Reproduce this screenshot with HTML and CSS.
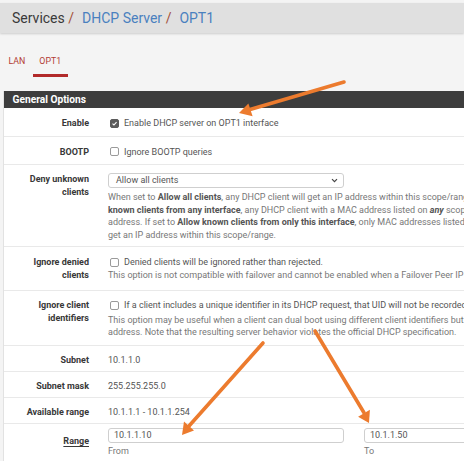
FILE: index.html
```html
<!DOCTYPE html>
<html lang="en">
<head>
<meta charset="utf-8">
<title>Services / DHCP Server / OPT1</title>
<link rel="stylesheet" href="styles.css">
</head>
<body>
<header class="crumbs">
  <span class="crumb-root">Services</span><span class="sep">/</span><a class="crumb-link">DHCP Server</a><span class="sep">/</span><a class="crumb-link">OPT1</a>
</header>

<nav class="tabs">
  <a class="tab">LAN</a>
  <a class="tab active">OPT1</a>
</nav>

<section class="panel">
  <h2 class="panel-title">General Options</h2>

  <div class="row r-chk">
    <div class="lbl">Enable</div>
    <div class="val">
      <label class="chk"><span class="box checked"><svg viewBox="0 0 10 10" width="9" height="9"><path d="M2.2 5.2 L4.2 7.2 L7.9 2.9" fill="none" stroke="#fff" stroke-width="1.6"/></svg></span>Enable DHCP server on OPT1 interface</label>
    </div>
  </div>

  <div class="row r-chk">
    <div class="lbl">BOOTP</div>
    <div class="val">
      <label class="chk"><span class="box"></span>Ignore BOOTP queries</label>
    </div>
  </div>

  <div class="row r-deny">
    <div class="lbl lbl-multi">Deny unknown<br>clients</div>
    <div class="val">
      <div class="select">Allow all clients<svg class="chev" viewBox="0 0 8 6" width="7" height="5"><path d="M1 1.3 L4 4.3 L7 1.3" fill="none" stroke="#444" stroke-width="1.4"/></svg></div>
      <div class="help">
        <div class="line">When set to <b>Allow all clients</b>, any DHCP client will get an IP address within this scope/range on this interface. If set to <b>Allow</b></div>
        <div class="line"><b>known clients from any interface</b>, any DHCP client with a MAC address listed on <b><i>any</i></b> scope(s)/interface(s) will get an IP</div>
        <div class="line">address. If set to <b>Allow known clients from only this interface</b>, only MAC addresses listed below (i.e. for this interface) will</div>
        <div class="line">get an IP address within this scope/range.</div>
      </div>
    </div>
  </div>

  <div class="row r-denied">
    <div class="lbl lbl-multi">Ignore denied<br>clients</div>
    <div class="val">
      <label class="chk"><span class="box"></span>Denied clients will be ignored rather than rejected.</label>
      <div class="help">
        <div class="line">This option is not compatible with failover and cannot be enabled when a Failover Peer IP address is configured.</div>
      </div>
    </div>
  </div>

  <div class="row r-uid">
    <div class="lbl lbl-multi">Ignore client<br>identifiers</div>
    <div class="val">
      <label class="chk"><span class="box"></span>If a client includes a unique identifier in its DHCP request, that UID will not be recorded<span class="mark"></span> in its lease.</label>
      <div class="help help-gap">
        <div class="line">This option may be useful when a client can dual boot using different client identifiers but the same hardware (MAC)</div>
        <div class="line">address. Note that the resulting server behavior violates the official DHCP specification.</div>
      </div>
    </div>
  </div>

  <div class="row r-static">
    <div class="lbl">Subnet</div>
    <div class="val">10.1.1.0</div>
  </div>

  <div class="row r-static">
    <div class="lbl">Subnet mask</div>
    <div class="val">255.255.255.0</div>
  </div>

  <div class="row r-static">
    <div class="lbl">Available range</div>
    <div class="val">10.1.1.1 - 10.1.1.254</div>
  </div>

  <div class="row r-range">
    <div class="lbl"><span class="abbr">Range</span></div>
    <div class="val range-cols">
      <div class="range-col">
        <div class="input">10.1.1.10</div>
        <div class="sub">From</div>
      </div>
      <div class="range-col">
        <div class="input">10.1.1.50</div>
        <div class="sub">To</div>
      </div>
    </div>
  </div>
</section>

<svg class="annot" viewBox="0 0 464 461" width="464" height="461">
  <g stroke="#ec7b2e" stroke-width="3.6" stroke-linecap="round" fill="none">
    <line x1="344" y1="82" x2="250" y2="109.6"/>
    <line x1="263" y1="343" x2="189" y2="426"/>
    <line x1="315" y1="331" x2="364" y2="412.7"/>
  </g>
  <g fill="#ec7b2e">
    <polygon points="239,113 252.6,116.2 248.4,103.4"/>
    <polygon points="182,435 194,430.5 184,421.5"/>
    <polygon points="369,423 369.9,409.8 358.1,416.8"/>
  </g>
</svg>
</body>
</html>
```

FILE: styles.css
```css
* { box-sizing: border-box; }

html, body { margin: 0; padding: 0; }

body {
  position: relative;
  width: 464px;
  height: 461px;
  overflow: hidden;
  background: #f4f4f4;
  font-family: Roboto, "Liberation Sans", sans-serif;
  color: #555;
}

/* breadcrumb header */
.crumbs {
  margin-top: 3px;
  height: 30px;
  background: #e0e0e0;
  box-shadow: 0 1px 2px rgba(0, 0, 0, 0.16);
  display: flex;
  align-items: center;
  padding-left: 12px;
  font-size: 14px;
  white-space: nowrap;
}
.crumb-root { color: #3a3a3a; }
.crumb-link { color: #4a80bf; }
.sep { color: #a4503a; margin: 0 8px 0 3.5px; }

/* tabs */
.tabs {
  display: flex;
  margin-top: 15px;
  padding-left: 2px;
}
.tab {
  padding: 7px 6.5px 6px;
  line-height: 13px;
  font-size: 8.8px;
  color: #b23b35;
  border-bottom: 3px solid transparent;
  margin-right: 1px;
}
.tab.active { border-bottom-color: #b22a2a; }

/* panel */
.panel {
  margin: 14px 0 0 3px;
  width: 720px;
  background: #fff;
  border-left: 1px solid #e2e2e2;
}
.panel-title {
  margin: 0;
  height: 17px;
  line-height: 17px;
  padding-left: 8.5px;
  background: #3d3d3d;
  color: #fff;
  font-size: 10.2px;
  font-weight: 700;
}

.row {
  display: grid;
  grid-template-columns: 95px 1fr;
  border-bottom: 1px solid #e9e9e9;
  font-size: 9px;
  line-height: 12.5px;
}
.lbl {
  text-align: right;
  padding-right: 10px;
  font-weight: 700;
  color: #383838;
  white-space: nowrap;
}
.val {
  padding-left: 9px;
  white-space: nowrap;
  color: #555;
}

.r-chk { padding: 9px 0 6px; }
.r-deny { padding: 8px 0 5px; }
.r-denied { padding: 9px 0 9px; }
.r-uid { padding: 8px 0 6px; }
.r-static { padding: 8.5px 0 4px; }
.r-range { padding: 4px 0 6px; }
.r-range .lbl { padding-top: 7.5px; }

/* checkbox */
.chk { display: flex; align-items: center; color: #555; }
.box {
  width: 9px;
  height: 9px;
  margin: 0 5px 0 2px;
  border: 1px solid #9a9a9a;
  border-radius: 2px;
  background: #fff;
  display: inline-flex;
  align-items: center;
  justify-content: center;
  flex: none;
}
.box.checked { background: #5b5b5b; border-color: #5b5b5b; }
.box svg { display: block; }
.mark {
  display: inline-block;
  width: 4px;
  height: 9px;
  background: #b9d3ea;
}

/* select */
.select {
  position: relative;
  width: 236px;
  height: 15px;
  border: 1px solid #cfcfcf;
  border-radius: 3px;
  padding-left: 7px;
  line-height: 13px;
  color: #555;
}
.chev { position: absolute; right: 5px; top: 4px; }

/* help text */
.help { color: #777; }
.r-deny .help { margin-top: 3px; }
.help-gap { margin-top: 2px; }
.line { white-space: nowrap; }
.help b { color: #555; }

/* range */
.abbr { text-decoration: underline; text-underline-offset: 2px; }
.range-cols { display: flex; gap: 20px; }
.range-col { width: 236px; }
.input {
  height: 15px;
  border: 1px solid #cfcfcf;
  border-radius: 3px;
  padding-left: 5px;
  line-height: 13px;
  color: #555;
}
.sub { margin-top: 2px; color: #777; }

/* annotation arrows */
.annot {
  position: absolute;
  left: 0;
  top: 0;
  pointer-events: none;
}
```
